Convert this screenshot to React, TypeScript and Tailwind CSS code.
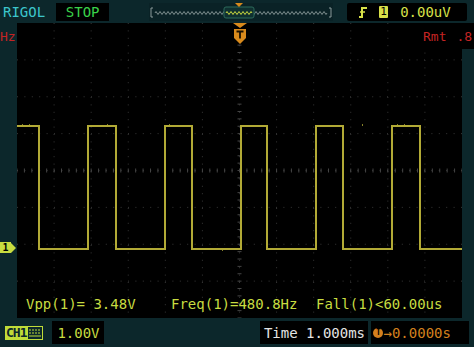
import React from 'react';

const GRID_W = 445;
const GRID_H = 295;

const mono = { fontFamily: '"DejaVu Sans Mono", "Liberation Mono", monospace' };

const Grid = () => {
  const vLines = Array.from({ length: 11 }, (_, i) => ((i + 1) * GRID_W) / 12);
  const hLines = Array.from({ length: 7 }, (_, i) => ((i + 1) * GRID_H) / 8);
  const cx = GRID_W / 2;
  const cy = GRID_H / 2;
  const ticksX = Array.from({ length: 61 }, (_, i) => (i * GRID_W) / 60);
  const ticksY = Array.from({ length: 41 }, (_, i) => (i * GRID_H) / 40);
  const wave =
    'M0,103 H22 V226 H71 V103 H99 V226 H148 V103 H175 V226 H224 V103 H250 V226 H299 V103 H326 V226 H375 V103 H403 V226 H445';

  return (
    <svg width={GRID_W} height={GRID_H} className="block">
      <rect width={GRID_W} height={GRID_H} fill="#000" />
      {vLines.map((x) => (
        <line key={'v' + x} x1={x} y1={0} x2={x} y2={GRID_H} stroke="#363636" strokeDasharray="1 6.4" />
      ))}
      {hLines.map((y) => (
        <line key={'h' + y} x1={0} y1={y} x2={GRID_W} y2={y} stroke="#363636" strokeDasharray="1 6.4" />
      ))}
      {ticksX.map((x) => (
        <line key={'tx' + x} x1={x} y1={cy - 2} x2={x} y2={cy + 2} stroke="#454545" />
      ))}
      {ticksY.map((y) => (
        <line key={'ty' + y} x1={cx - 2} y1={y} x2={cx + 2} y2={y} stroke="#454545" />
      ))}
      <path d={wave} fill="none" stroke="#b2aa36" strokeWidth={2} />
      <path d="M5,102 h1 M12,102 h1 M90,102 h1 M115,226 h1 M152,102 h1 M205,227 h1 M298,226 h1 M345,102 h1 M380,102 h1 M387,102 h1" stroke="#b2aa36" strokeWidth={1.5} />
    </svg>
  );
};

const MemoryBar = () => (
  <div className="relative w-[184px] h-[18px] bg-[#0a2226] ml-[40px] flex items-center">
    <svg width={184} height={18} className="block">
      <path d="M4,5 h-2 v9 h2" stroke="#8a9a9a" fill="none" />
      <path
        d={'M6,10 ' + Array.from({ length: 86 }, (_, i) => `q1,${i % 2 ? 3 : -3} 2,0`).join(' ')}
        stroke="#8a9a9a"
        fill="none"
        strokeWidth={0.9}
      />
      <rect x={75} y={4} width={30} height={11} rx={2} fill="#0f3030" stroke="#2c6a5a" />
      <path
        d={'M77,10 ' + Array.from({ length: 13 }, (_, i) => `q1,${i % 2 ? 3 : -3} 2,0`).join(' ')}
        stroke="#c8d840"
        fill="none"
        strokeWidth={1}
      />
      <path d="M180,5 h2 v9 h-2" stroke="#8a9a9a" fill="none" />
      <path d="M86,0 h8 l-4,4 z" fill="#d88a1c" />
    </svg>
  </div>
);

export default function App() {
  return (
    <div className="relative w-[474px] h-[347px] bg-[#0c272b] overflow-hidden flex flex-col" style={mono}>
      {/* header */}
      <div className="h-[23px] flex items-center">
        <span className="ml-[3px] text-[14px] leading-none text-[#3cc6cc]">RIGOL</span>
        <div className="ml-[11px] w-[53px] h-[18px] bg-black flex items-center justify-center text-[14px] leading-none text-[#3ad24a]">
          STOP
        </div>
        <MemoryBar />
        <div className="ml-[14px] w-[120px] h-[18px] bg-black rounded-[2px] flex items-center text-[14px] leading-none text-[#d8e048]">
          <svg width={12} height={12} className="ml-[10px]">
            <path d="M2,11 h3 v-9 h5" stroke="#d8e048" strokeWidth={2} fill="none" />
            <path d="M3,6 h5" stroke="#d8e048" strokeWidth={1.5} />
          </svg>
          <span className="ml-[10px] w-[9px] h-[12px] bg-[#d8e048] text-black text-[11px] leading-[12px] text-center rounded-[1px]">
            1
          </span>
          <span className="ml-[12px]">0.00uV</span>
        </div>
      </div>

      {/* screen */}
      <div className="flex h-[295px]">
        <div className="w-[17px] relative">
          <span className="absolute left-0 top-[7px] text-[13px] leading-none text-[#c42424]">Hz</span>
          <div className="absolute left-0 top-[219px] flex items-center">
            <div className="w-[11px] h-[11px] bg-[#c8dc40] text-black text-[10px] leading-[11px] text-center font-bold">
              1
            </div>
            <div className="w-0 h-0 border-y-[5.5px] border-y-transparent border-l-[5px] border-l-[#c8dc40]" />
          </div>
        </div>
        <div className="relative w-[445px]">
          <Grid />
          <div className="absolute left-[9px] bottom-[7px] flex text-[14px] leading-none text-[#c8dc40]">
            <span className="w-[145px]">Vpp(1)= 3.48V</span>
            <span className="w-[145px]">Freq(1)=480.8Hz</span>
            <span>Fall(1)&lt;60.00us</span>
          </div>
          {/* trigger position marker */}
          <svg width={16} height={21} className="absolute left-[215px] top-0">
            <path d="M1,0 h14 l-7,5 z" fill="#d88a1c" />
            <path d="M2,6 h12 v9 l-6,6 l-6,-6 z" fill="#d88a1c" />
            <path d="M4.5,8.5 h7 M8,8.5 v7" stroke="#1a1000" strokeWidth={1.8} />
          </svg>
        </div>
        <div className="w-[12px]" />
      </div>
      <div className="absolute right-0 top-[23px] w-[54px] h-[26px] bg-black flex items-start pt-[7px] text-[13px] leading-none text-[#c42424]">
        <span className="ml-[3px]">Rmt</span>
        <span className="ml-[10px]">.8</span>
      </div>

      {/* bottom bar */}
      <div className="flex-1 flex items-center">
        <div className="ml-[5px] h-[14px] bg-[#c0dc38] flex items-center px-[1px]">
          <span className="text-[13px] leading-none text-[#0c272b] font-bold tracking-[-1px]">CH1</span>
          <svg width={14} height={12} className="ml-[2px]">
            <rect width={14} height={12} fill="#0c272b" />
            <path d="M1,3 h12 M1,6 h12" stroke="#c0dc38" strokeDasharray="2 1" />
            <path d="M1,9 h12" stroke="#c0dc38" />
          </svg>
        </div>
        <div className="ml-[9px] w-[52px] h-[23px] bg-black flex items-center justify-center text-[14px] leading-none text-[#c8dc40]">
          1.00V
        </div>
        <div className="ml-[156px] w-[108px] h-[23px] bg-black flex items-center justify-center text-[14px] leading-none text-[#e4e4e4]">
          Time 1.000ms
        </div>
        <div className="ml-[3px] w-[98px] h-[23px] bg-black flex items-center text-[14px] leading-none text-[#d4801e]">
          <span className="ml-[2px] w-[10px] h-[10px] rounded-full bg-[#d4801e] text-black text-[8px] leading-[10px] text-center font-bold">
            T
          </span>
          <span>→0.0000s</span>
        </div>
      </div>
    </div>
  );
}
